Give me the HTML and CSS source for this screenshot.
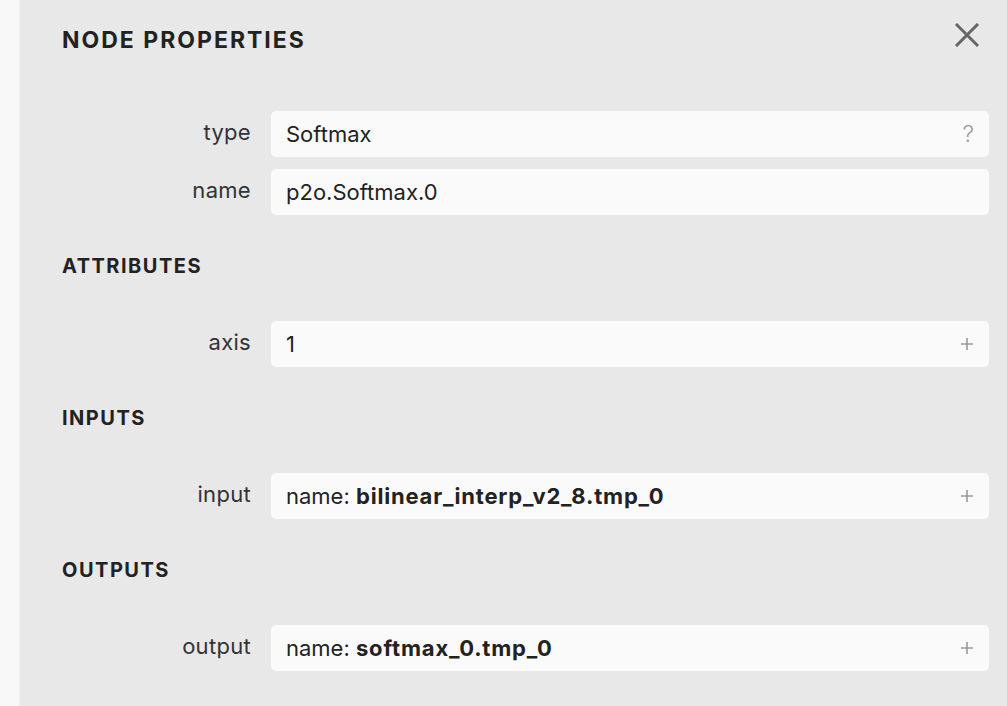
FILE: index.html
```html
<!DOCTYPE html>
<html>
<head>
<meta charset="utf-8">
<link rel="stylesheet" href="styles.css">
</head>
<body>
<div class="edge"></div>
<div class="panel">
  <div class="header">
    <div class="title">NODE PROPERTIES</div>
    <div class="close">
      <svg width="24" height="24" viewBox="0 0 24 24"><path d="M2 2 L22 22 M22 2 L2 22" stroke="#666" stroke-width="3" stroke-linecap="square"/></svg>
    </div>
  </div>

  <div class="rows first">
    <div class="row">
      <div class="label">type</div>
      <div class="box"><span class="val">Softmax</span><span class="qmark">?</span></div>
    </div>
    <div class="row">
      <div class="label">name</div>
      <div class="box"><span class="val">p2o.Softmax.0</span></div>
    </div>
  </div>

  <div class="section-title">ATTRIBUTES</div>
  <div class="rows">
    <div class="row">
      <div class="label">axis</div>
      <div class="box"><span class="val">1</span><svg class="plus" width="12" height="12" viewBox="0 0 12 12"><path d="M6 0 V12 M0 6 H12" stroke="#9a9a9a" stroke-width="1.6"/></svg></div>
    </div>
  </div>

  <div class="section-title">INPUTS</div>
  <div class="rows">
    <div class="row">
      <div class="label">input</div>
      <div class="box"><span class="val">name: <b>bilinear_interp_v2_8.tmp_0</b></span><svg class="plus" width="12" height="12" viewBox="0 0 12 12"><path d="M6 0 V12 M0 6 H12" stroke="#9a9a9a" stroke-width="1.6"/></svg></div>
    </div>
  </div>

  <div class="section-title">OUTPUTS</div>
  <div class="rows">
    <div class="row">
      <div class="label">output</div>
      <div class="box"><span class="val">name: <b>softmax_0.tmp_0</b></span><svg class="plus" width="12" height="12" viewBox="0 0 12 12"><path d="M6 0 V12 M0 6 H12" stroke="#9a9a9a" stroke-width="1.6"/></svg></div>
    </div>
  </div>
</div>
</body>
</html>
```

FILE: styles.css
```css
html, body {
  margin: 0;
  height: 100%;
}
body {
  display: flex;
  font-family: Inter, "Noto Sans", sans-serif;
  color: #222;
  background: #f8f8f8;
  overflow: hidden;
}
.edge {
  width: 19px;
  flex: none;
  background: #f8f8f8;
  border-right: 1px solid #f1f1f1;
}
.panel {
  flex: 1;
  background: #e8e8e8;
  padding: 0 18px 0 42px;
}
.header {
  height: 79px;
  display: flex;
  align-items: center;
  justify-content: space-between;
  padding-right: 10px;
}
.title {
  font-size: 23px;
  font-weight: 700;
  letter-spacing: 2px;
  color: #222;
}
.close {
  width: 24px;
  height: 24px;
  margin-top: -10px;
}
.close svg { display: block; }
.rows {
  display: flex;
  flex-direction: column;
  gap: 12px;
}
.rows.first {
  margin-top: 32px;
}
.row {
  display: grid;
  grid-template-columns: 189px 1fr;
  column-gap: 20px;
}
.label {
  text-align: right;
  font-size: 22px;
  letter-spacing: 0.3px;
  line-height: 42px;
  color: #333;
}
.box {
  height: 46px;
  background: #fafafa;
  border-radius: 5px;
  display: flex;
  align-items: center;
  justify-content: space-between;
  padding: 0 15px;
  font-size: 22px;
  color: #222;
}
.val b { font-weight: 700; letter-spacing: 0.8px; }
.qmark {
  color: #999;
  font-size: 23px;
  font-weight: 300;
}
.plus {
  display: block;
  margin-right: 1px;
}
.section-title {
  margin: 28px 0 32px;
  height: 46px;
  line-height: 46px;
  font-size: 20px;
  font-weight: 700;
  letter-spacing: 1.5px;
  color: #222;
}
```
